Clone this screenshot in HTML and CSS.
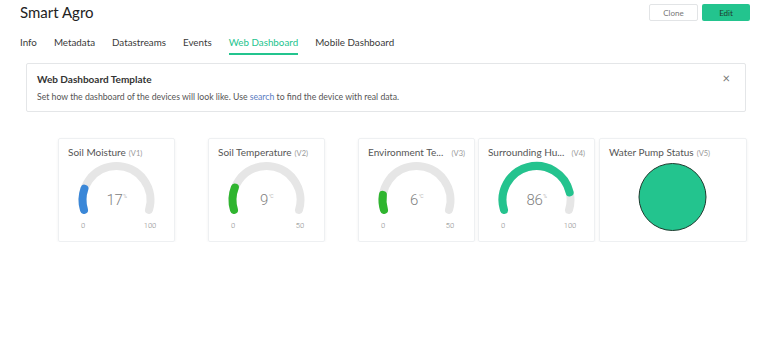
FILE: index.html
```html
<!DOCTYPE html>
<html lang="en">
<head>
  <meta charset="UTF-8" />
  <meta name="viewport" content="width=device-width, initial-scale=1.0"/>
  <title>Smart Agro - Web Dashboard</title>
  <link rel="stylesheet" href="styles.css">
</head>
<body>
  <div class="page">
    <div class="topbar">
      <h1 class="title">Smart Agro</h1>
      <div class="actions">
        <button class="btn btn-clone">Clone</button>
        <button class="btn btn-edit">Edit</button>
      </div>
    </div>

    <nav class="tabs">
      <a class="tab">Info</a>
      <a class="tab">Metadata</a>
      <a class="tab">Datastreams</a>
      <a class="tab">Events</a>
      <a class="tab active">Web Dashboard</a>
      <a class="tab">Mobile Dashboard</a>
    </nav>

    <div class="notice">
      <div class="notice-body">
        <div class="notice-title">Web Dashboard Template</div>
        <div class="notice-text">Set how the dashboard of the devices will look like. Use <a class="link">search</a> to find the device with real data.</div>
      </div>
      <span class="notice-close">&times;</span>
    </div>

    <div class="widgets">
      <div class="card spaced">
        <div class="card-title"><span class="name">Soil Moisture</span><span class="pin">(V1)</span></div>
        <svg class="gauge" viewBox="0 0 97 76" width="97" height="76">
          <path class="track" d="M 15.99 51.94 A 34 34 0 1 1 81.01 51.94"/>
          <path class="bar blue" d="M 15.99 51.94 A 34 34 0 0 1 16.43 30.71"/>
          <text class="value" x="48.5" y="47">17<tspan class="unit" dx="1" dy="-7">%</tspan></text>
          <text class="limit" x="15" y="70">0</text>
          <text class="limit" x="82" y="70">100</text>
        </svg>
      </div>

      <div class="card spaced">
        <div class="card-title"><span class="name">Soil Temperature</span><span class="pin">(V2)</span></div>
        <svg class="gauge" viewBox="0 0 97 76" width="97" height="76">
          <path class="track" d="M 15.99 51.94 A 34 34 0 1 1 81.01 51.94"/>
          <path class="bar green" d="M 15.99 51.94 A 34 34 0 0 1 16.87 29.54"/>
          <text class="value" x="48.5" y="47">9<tspan class="unit" dx="1" dy="-7">°C</tspan></text>
          <text class="limit" x="15" y="70">0</text>
          <text class="limit" x="82" y="70">50</text>
        </svg>
      </div>

      <div class="card">
        <div class="card-title"><span class="name">Environment Te...</span><span class="pin pin-end">(V3)</span></div>
        <svg class="gauge" viewBox="0 0 97 76" width="97" height="76">
          <path class="track" d="M 15.99 51.94 A 34 34 0 1 1 81.01 51.94"/>
          <path class="bar green" d="M 15.99 51.94 A 34 34 0 0 1 14.89 36.86"/>
          <text class="value" x="48.5" y="47">6<tspan class="unit" dx="1" dy="-7">°C</tspan></text>
          <text class="limit" x="15" y="70">0</text>
          <text class="limit" x="82" y="70">50</text>
        </svg>
      </div>

      <div class="card">
        <div class="card-title"><span class="name">Surrounding Hu...</span><span class="pin pin-end">(V4)</span></div>
        <svg class="gauge" viewBox="0 0 97 76" width="97" height="76">
          <path class="track" d="M 15.99 51.94 A 34 34 0 1 1 81.01 51.94"/>
          <path class="bar teal" d="M 15.99 51.94 A 34 34 0 1 1 81.63 34.35"/>
          <text class="value" x="48.5" y="47">86<tspan class="unit" dx="1" dy="-7">%</tspan></text>
          <text class="limit" x="15" y="70">0</text>
          <text class="limit" x="82" y="70">100</text>
        </svg>
      </div>

      <div class="card card-wide">
        <div class="card-title"><span class="name">Water Pump Status</span><span class="pin">(V5)</span></div>
        <svg class="led" viewBox="0 0 127 76" width="127" height="76">
          <circle cx="63.5" cy="39" r="33.5"/>
        </svg>
      </div>
    </div>
  </div>
</body>
</html>
```

FILE: styles.css
```css
body {
  margin: 0;
  background: #fff;
  font-family: Lato, "Noto Sans", sans-serif;
  color: #333;
}
.page {
  padding: 0 18px 0 20px;
}
.topbar {
  display: flex;
  justify-content: space-between;
  align-items: flex-start;
}
.title {
  margin: 0;
  font-size: 15px;
  font-weight: 400;
  line-height: 24px;
  color: #222;
}
.actions {
  display: flex;
  gap: 4px;
  margin-top: 4px;
}
.btn {
  height: 17px;
  width: 49px;
  padding: 0;
  font-family: Lato, "Noto Sans", sans-serif;
  font-size: 8px;
  border-radius: 2px;
  cursor: pointer;
}
.btn-clone {
  background: #fff;
  border: 1px solid #e2e4e6;
  color: #777;
}
.btn-edit {
  width: 48px;
  background: #23c48e;
  border: none;
  color: #1d3a2f;
}

.tabs {
  display: flex;
  gap: 17px;
  margin-top: 11px;
}
.tab {
  font-size: 9.8px;
  line-height: 14px;
  padding-bottom: 4px;
  border-bottom: 2px solid transparent;
  color: #3a3a3a;
}
.tab.active {
  color: #23c48e;
  border-bottom-color: #23c48e;
}

.notice {
  display: flex;
  align-items: flex-start;
  margin: 8px 4px 0 6px;
  padding: 9px 10px 8px 10px;
  border: 1px solid #e4e6e8;
  border-radius: 2px;
}
.notice-body {
  flex: 1;
}
.notice-title {
  font-size: 10px;
  font-weight: 700;
  line-height: 12px;
  color: #333;
}
.notice-text {
  margin-top: 6px;
  font-size: 8.7px;
  line-height: 12px;
  color: #555;
}
.link {
  color: #5b7dc2;
}
.notice-close {
  font-size: 13px;
  line-height: 10px;
  color: #777;
  margin-right: 5px;
}

.widgets {
  display: flex;
  gap: 3px;
  margin: 26px 0 0 38px;
}
.card {
  width: 117px;
  height: 104px;
  box-sizing: border-box;
  padding: 7px 9px 0 9px;
  border: 1px solid #eef0f2;
  border-radius: 2px;
  box-shadow: 0 1px 3px rgba(0, 0, 0, 0.06);
}
.card.spaced {
  margin-right: 30px;
}
.card-wide {
  width: 148px;
  margin-left: 1px;
}
.card-title {
  display: flex;
  align-items: baseline;
  gap: 3px;
  height: 12px;
  line-height: 12px;
  white-space: nowrap;
}
.name {
  font-size: 10px;
  color: #555;
}
.pin {
  font-size: 7.5px;
  color: #999;
}
.pin-end {
  margin-left: auto;
}
.gauge, .led {
  display: block;
  margin-top: 0;
}
.track, .bar {
  fill: none;
  stroke-width: 8;
  stroke-linecap: round;
}
.track {
  stroke: #e6e6e6;
}
.bar.blue {
  stroke: #3a87d8;
}
.bar.green {
  stroke: #2fb52f;
}
.bar.teal {
  stroke: #24c38e;
}
.value {
  font-family: Roboto, sans-serif;
  font-weight: 300;
  font-size: 15px;
  fill: #808080;
  text-anchor: middle;
  letter-spacing: -0.5px;
}
.unit {
  font-size: 5px;
  fill: #999;
}
.limit {
  font-family: Roboto, sans-serif;
  font-weight: 300;
  font-size: 7.5px;
  fill: #888;
  text-anchor: middle;
}
.led circle {
  fill: #23c48e;
  stroke: #1f3a2e;
  stroke-width: 1;
}
```
